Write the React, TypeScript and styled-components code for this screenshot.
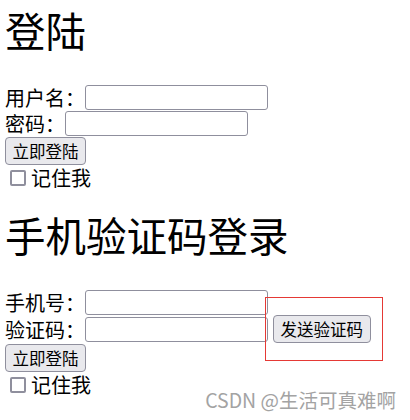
import React from "react";
import styled, { createGlobalStyle } from "styled-components";

const GlobalStyle = createGlobalStyle`
  html, body {
    margin: 0;
    padding: 0;
    background: #ffffff;
  }
  body {
    font-family: "Liberation Serif", "Noto Sans CJK SC", serif;
    color: #000000;
  }
`;

const Page = styled.div`
  position: relative;
  width: 410px;
  height: 420px;
  padding: 0 5px;
  box-sizing: border-box;
  overflow: hidden;
`;

const Title = styled.h1<{ $top: number }>`
  margin: ${(p) => p.$top}px 0 30px;
  height: 48px;
  font-size: 40.5px;
  line-height: 48px;
  font-weight: 400;
  font-family: "Noto Sans CJK SC", serif;
`;

const Form = styled.form`
  display: flex;
  flex-direction: column;
  align-items: flex-start;
`;

const Row = styled.div<{ $height: number }>`
  display: flex;
  align-items: center;
  height: ${(p) => p.$height}px;
`;

const Label = styled.label`
  font-size: 20px;
  font-family: "Noto Sans CJK SC", serif;
  line-height: 21px;
  white-space: nowrap;
`;

const TextInput = styled.input`
  width: 183px;
  height: 25px;
  box-sizing: border-box;
  margin: 0;
  padding: 2px 3px;
  border: 1px solid #8f8f9d;
  border-radius: 3px;
  background: #ffffff;
  font-size: 16px;
  outline: none;
`;

const Button = styled.button<{ $gap?: number }>`
  height: 28px;
  margin: 0 0 0 ${(p) => p.$gap ?? 0}px;
  padding: 0 6.5px;
  box-sizing: border-box;
  border: 1px solid #8f8f9d;
  border-radius: 4px;
  background: #e9e9ed;
  color: #000000;
  font-size: 16.5px;
  font-family: "Noto Sans CJK SC", sans-serif;
  line-height: 24px;
  cursor: pointer;
`;

const CheckRow = styled.label`
  display: flex;
  align-items: center;
  height: 22px;
  margin-top: 2px;
  font-size: 20px;
  line-height: 22px;
  font-family: "Noto Sans CJK SC", serif;
`;

const Check = styled.input`
  appearance: none;
  width: 16px;
  height: 16px;
  margin: 0 5px 0 5px;
  box-sizing: border-box;
  border: 2px solid #8f8f9d;
  border-radius: 2px;
  background: #ffffff;
`;

const Highlight = styled.div`
  position: absolute;
  left: 265px;
  top: 297px;
  width: 118px;
  height: 64px;
  box-sizing: border-box;
  border: 1px solid #e53935;
  pointer-events: none;
`;

const Watermark = styled.div`
  position: absolute;
  right: 14px;
  top: 385px;
  font-size: 19.5px;
  font-family: "Noto Sans CJK SC", sans-serif;
  color: #a3a3a3;
  text-shadow: 0 0 1px #ffffff;
  white-space: nowrap;
`;

function Remember() {
  return (
    <CheckRow>
      <Check type="checkbox" />
      记住我
    </CheckRow>
  );
}

export default function App() {
  return (
    <>
      <GlobalStyle />
      <Page>
        <Title $top={6}>登陆</Title>
        <Form>
          <Row $height={26}>
            <Label>用户名：</Label>
            <TextInput type="text" />
          </Row>
          <Row $height={26}>
            <Label>密码：</Label>
            <TextInput type="password" />
          </Row>
          <Button type="button" style={{ marginTop: 1 }}>
            立即登陆
          </Button>
          <Remember />
        </Form>

        <Title $top={22}>手机验证码登录</Title>
        <Form>
          <Row $height={26}>
            <Label>手机号：</Label>
            <TextInput type="text" />
          </Row>
          <Row $height={28}>
            <Label>验证码：</Label>
            <TextInput type="text" />
            <Button type="button" $gap={5}>
              发送验证码
            </Button>
          </Row>
          <Button type="button" style={{ marginTop: 1 }}>
            立即登陆
          </Button>
          <Remember />
        </Form>

        <Highlight />
        <Watermark>CSDN @生活可真难啊</Watermark>
      </Page>
    </>
  );
}
